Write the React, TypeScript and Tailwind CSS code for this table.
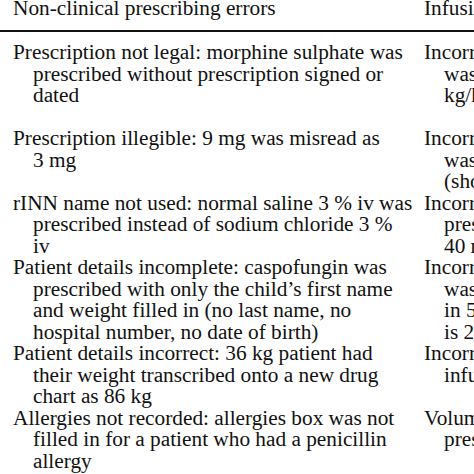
import React from "react";

type Row = { left: string[]; right: string[]; lines: number };

const rows: Row[] = [
  {
    left: [
      "Prescription not legal: morphine sulphate was",
      "prescribed without prescription signed or",
      "dated",
    ],
    right: ["Incorrect units: morphine", "was prescribed as 20 microgram/", "kg/h instead of 20 microgram/kg/min"],
    lines: 4,
  },
  {
    left: ["Prescription illegible: 9 mg was misread as", "3 mg"],
    right: ["Incorrect concentration: dopamine", "was prescribed as 60 mg in 50 mL", "(should be 30 mg in 50 mL)"],
    lines: 3,
  },
  {
    left: [
      "rINN name not used: normal saline 3 % iv was",
      "prescribed instead of sodium chloride 3 %",
      "iv",
    ],
    right: ["Incorrect rate: infusion", "prescribed at 4 mL/h instead of", "40 mL/h"],
    lines: 3,
  },
  {
    left: [
      "Patient details incomplete: caspofungin was",
      "prescribed with only the child\u2019s first name",
      "and weight filled in (no last name, no",
      "hospital number, no date of birth)",
    ],
    right: ["Incorrect dilution: midazolam", "was prescribed as 50 mg", "in 50 mL when the standard", "is 25 mg in 50 mL"],
    lines: 4,
  },
  {
    left: [
      "Patient details incorrect: 36 kg patient had",
      "their weight transcribed onto a new drug",
      "chart as 86 kg",
    ],
    right: ["Incorrect fluid: wrong diluent", "infusion fluid prescribed"],
    lines: 3,
  },
  {
    left: [
      "Allergies not recorded: allergies box was not",
      "filled in for a patient who had a penicillin",
      "allergy",
    ],
    right: ["Volume not stated: infusion", "prescribed without a volume"],
    lines: 3,
  },
];

function Cell({ lines }: { lines: string[] }) {
  return (
    <div>
      {lines.map((t, i) => (
        <div key={i} className={i === 0 ? "whitespace-nowrap" : "whitespace-nowrap pl-5"}>
          {t}
        </div>
      ))}
    </div>
  );
}

export default function App() {
  return (
    <div
      className="w-[474px] h-[474px] overflow-hidden bg-white text-[#111111] text-[21.3px] leading-[21.5px]"
      style={{ fontFamily: '"Liberation Serif", "Times New Roman", serif' }}
    >
      <div className="flex leading-[16px]">
        <div className="w-[424px] shrink-0 pl-[13px] whitespace-nowrap">Non-clinical prescribing errors</div>
        <div className="flex-1 overflow-hidden whitespace-nowrap">Infusion prescribing errors</div>
      </div>
      <div className="mt-[14px] h-[2px] w-full bg-[#111111]" />
      <div className="mt-[10px]">
        {rows.map((r, i) => (
          <div
            key={i}
            className={r.lines === 4 ? "flex h-[86px]" : "flex h-[64.5px]"}
          >
            <div className="w-[424px] shrink-0 pl-[13px]">
              <Cell lines={r.left} />
            </div>
            <div className="flex-1 overflow-hidden">
              <Cell lines={r.right} />
            </div>
          </div>
        ))}
      </div>
    </div>
  );
}
